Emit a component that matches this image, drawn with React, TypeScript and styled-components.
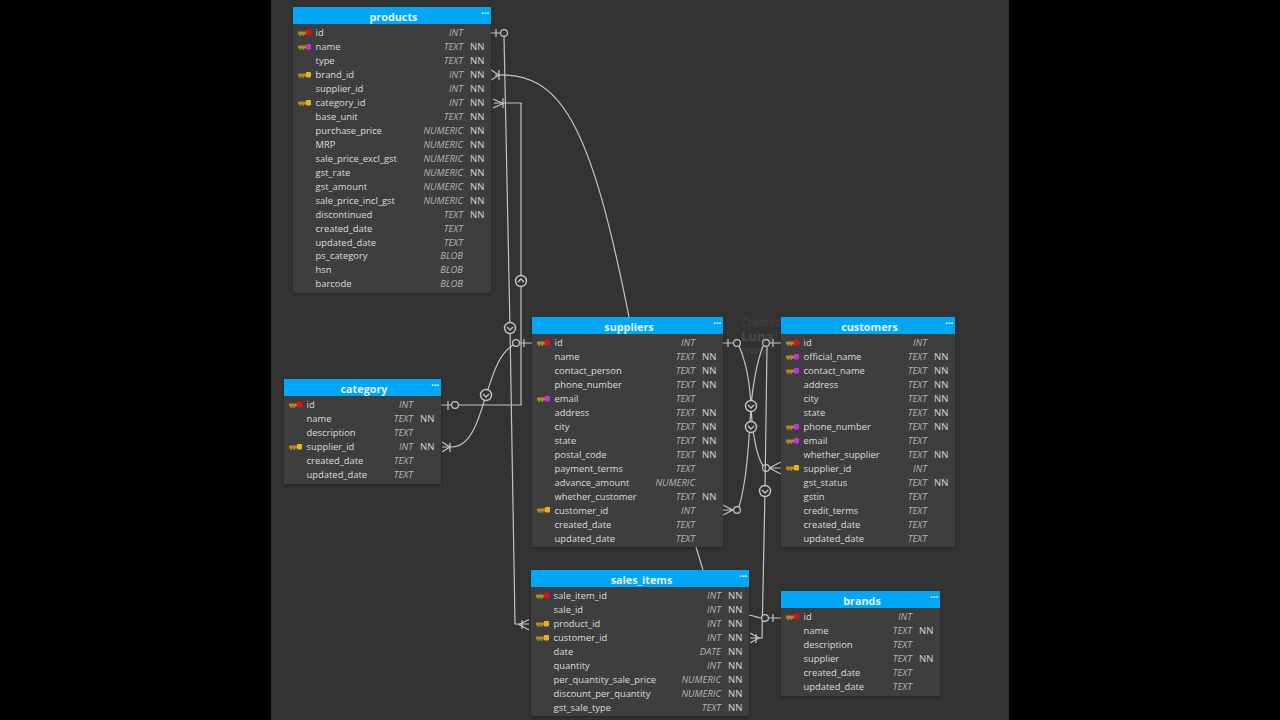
import React, { FC } from 'react';
import styled, { createGlobalStyle } from 'styled-components';

type KeyKind = 'pk' | 'uq' | 'fk';

interface IColumn {
  name: string;
  type: string;
  nn?: boolean;
  key?: KeyKind;
}

interface ITable {
  title: string;
  x: number;
  y: number;
  width: number;
  columns: IColumn[];
}

const col = (name: string, type: string, nn = false, key?: KeyKind): IColumn => ({
  name,
  type,
  nn,
  key,
});

const tables: ITable[] = [
  {
    title: 'products',
    x: 22,
    y: 7,
    width: 198,
    columns: [
      col('id', 'INT', false, 'pk'),
      col('name', 'TEXT', true, 'uq'),
      col('type', 'TEXT', true),
      col('brand_id', 'INT', true, 'fk'),
      col('supplier_id', 'INT', true),
      col('category_id', 'INT', true, 'fk'),
      col('base_unit', 'TEXT', true),
      col('purchase_price', 'NUMERIC', true),
      col('MRP', 'NUMERIC', true),
      col('sale_price_excl_gst', 'NUMERIC', true),
      col('gst_rate', 'NUMERIC', true),
      col('gst_amount', 'NUMERIC', true),
      col('sale_price_incl_gst', 'NUMERIC', true),
      col('discontinued', 'TEXT', true),
      col('created_date', 'TEXT'),
      col('updated_date', 'TEXT'),
      col('ps_category', 'BLOB'),
      col('hsn', 'BLOB'),
      col('barcode', 'BLOB'),
    ],
  },
  {
    title: 'suppliers',
    x: 261,
    y: 317,
    width: 191,
    columns: [
      col('id', 'INT', false, 'pk'),
      col('name', 'TEXT', true),
      col('contact_person', 'TEXT', true),
      col('phone_number', 'TEXT', true),
      col('email', 'TEXT', false, 'uq'),
      col('address', 'TEXT', true),
      col('city', 'TEXT', true),
      col('state', 'TEXT', true),
      col('postal_code', 'TEXT', true),
      col('payment_terms', 'TEXT'),
      col('advance_amount', 'NUMERIC'),
      col('whether_customer', 'TEXT', true),
      col('customer_id', 'INT', false, 'fk'),
      col('created_date', 'TEXT'),
      col('updated_date', 'TEXT'),
    ],
  },
  {
    title: 'customers',
    x: 510,
    y: 317,
    width: 174,
    columns: [
      col('id', 'INT', false, 'pk'),
      col('official_name', 'TEXT', true, 'uq'),
      col('contact_name', 'TEXT', true, 'uq'),
      col('address', 'TEXT', true),
      col('city', 'TEXT', true),
      col('state', 'TEXT', true),
      col('phone_number', 'TEXT', true, 'uq'),
      col('email', 'TEXT', false, 'uq'),
      col('whether_supplier', 'TEXT', true),
      col('supplier_id', 'INT', false, 'fk'),
      col('gst_status', 'TEXT', true),
      col('gstin', 'TEXT'),
      col('credit_terms', 'TEXT'),
      col('created_date', 'TEXT'),
      col('updated_date', 'TEXT'),
    ],
  },
  {
    title: 'category',
    x: 13,
    y: 379,
    width: 157,
    columns: [
      col('id', 'INT', false, 'pk'),
      col('name', 'TEXT', true),
      col('description', 'TEXT'),
      col('supplier_id', 'INT', true, 'fk'),
      col('created_date', 'TEXT'),
      col('updated_date', 'TEXT'),
    ],
  },
  {
    title: 'sales_items',
    x: 260,
    y: 570,
    width: 218,
    columns: [
      col('sale_item_id', 'INT', true, 'pk'),
      col('sale_id', 'INT', true),
      col('product_id', 'INT', true, 'fk'),
      col('customer_id', 'INT', true, 'fk'),
      col('date', 'DATE', true),
      col('quantity', 'INT', true),
      col('per_quantity_sale_price', 'NUMERIC', true),
      col('discount_per_quantity', 'NUMERIC', true),
      col('gst_sale_type', 'TEXT', true),
    ],
  },
  {
    title: 'brands',
    x: 510,
    y: 591,
    width: 159,
    columns: [
      col('id', 'INT', false, 'pk'),
      col('name', 'TEXT', true),
      col('description', 'TEXT'),
      col('supplier', 'TEXT', true),
      col('created_date', 'TEXT'),
      col('updated_date', 'TEXT'),
    ],
  },
];

const keyColors: Record<KeyKind, string> = {
  pk: '#e0101c',
  uq: '#d02fd8',
  fk: '#e8b418',
};

const GlobalStyle = createGlobalStyle`
  html, body {
    margin: 0;
    height: 100%;
    background: #000;
    font-family: "Open Sans", "Liberation Sans", sans-serif;
  }
`;

const Page = styled.div`
  display: flex;
  justify-content: center;
  height: 720px;
  overflow: hidden;
  background: #000;
`;

const Canvas = styled.div`
  position: relative;
  width: 738px;
  height: 720px;
  overflow: hidden;
  background: #333333;
`;

const Watermark = styled.div`
  position: absolute;
  left: 470px;
  top: 315px;
  color: #444444;
  font-size: 11px;
  line-height: 14px;
`;

const WatermarkStrong = styled.div`
  font-weight: 700;
  font-size: 13px;
  color: #4a4a4a;
`;

const Wires = styled.svg`
  position: absolute;
  left: 0;
  top: 0;
  fill: none;
  stroke: #c4c4c4;
  stroke-width: 1.2;
`;

const Table = styled.div<{ $x: number; $y: number; $width: number }>`
  position: absolute;
  left: ${({ $x }) => $x}px;
  top: ${({ $y }) => $y}px;
  width: ${({ $width }) => $width}px;
  padding-bottom: 2px;
  background: #3e3e3e;
  box-shadow: 0 1px 3px rgba(0, 0, 0, 0.3);
`;

const TableHeader = styled.div`
  position: relative;
  height: 17px;
  margin-bottom: 2px;
  padding-left: 3px;
  background: #00a7f6;
  color: #e4f3fb;
  font-size: 10.8px;
  font-weight: 700;
  line-height: 20px;
  text-align: center;
`;

const HeaderDots = styled.span`
  position: absolute;
  right: 2px;
  top: -3px;
  color: #cfeefc;
  font-size: 11px;
  font-weight: 700;
  line-height: 17px;
  letter-spacing: -0.5px;
`;

const Row = styled.div`
  display: flex;
  align-items: center;
  height: 13.95px;
  color: #dcdcdc;
  font-size: 9.4px;
  white-space: nowrap;
`;

const KeySlot = styled.span`
  display: flex;
  align-items: center;
  flex: none;
  width: 22.6px;
  padding-left: 5px;
  box-sizing: border-box;
`;

const ColumnName = styled.span`
  flex: 1;
`;

const ColumnType = styled.span`
  color: #b4b4b4;
  font-size: 9.5px;
  font-style: italic;
`;

const ColumnNull = styled.span`
  flex: none;
  width: 28px;
  padding-left: 7px;
  box-sizing: border-box;
  color: #d4d4d4;
  font-size: 9.5px;
`;

const KeyIcon: FC<{ kind: KeyKind }> = ({ kind }) => (
  <svg width="14" height="8" viewBox="0 0 14 8">
    <path d="M0 2.5h9v3H5.8v1.4H4.4V5.5H3v1.4H1.6V5.5H0z" fill="#b08c22" />
    {kind === 'pk' ? (
      <circle cx="10.5" cy="3.5" r="3" fill={keyColors[kind]} />
    ) : (
      <rect x="8" y="1" width="5" height="5.4" rx="0.8" fill={keyColors[kind]} />
    )}
  </svg>
);

// circle on the line, with a chevron showing the direction of the relation
const Chevron: FC<{ x: number; y: number; up?: boolean }> = ({ x, y, up }) => (
  <g>
    <circle cx={x} cy={y} r="5.5" fill="#333333" strokeWidth="1.4" />
    <path
      d={
        up
          ? `M${x - 3} ${y + 1}l3 -3l3 3`
          : `M${x - 3} ${y - 1}l3 3l3 -3`
      }
      strokeWidth="1.4"
    />
  </g>
);

const Ring: FC<{ x: number; y: number }> = ({ x, y }) => (
  <circle cx={x} cy={y} r="3.4" fill="#333333" />
);

const Connectors: FC = () => (
  <Wires width="738" height="720" viewBox="271 0 738 720">
    {/* products.id - sales_items.product_id */}
    <path d="M504 36L510 328L515 624H529" />
    <path d="M491 33H500M496 29V37" />
    <Ring x={504} y={33} />
    <path d="M522 620V629M529 619.5L519 624.5L529 630" />
    <Chevron x={510} y={328} />

    {/* category.id - products.category_id */}
    <path d="M459 405H521V103H494" />
    <path d="M441 405H451M448 401V410" />
    <Ring x={455} y={405} />
    <path d="M503 98V108M493 99L503 103.5L493 108" />
    <Chevron x={521} y={281} up />

    {/* suppliers.id - products.brand_id curve */}
    <path d="M495 75C560 72 590 120 629 317" />
    <path d="M499 70V80M491 70L499 75L491 80" />

    {/* suppliers.id - category.supplier_id */}
    <path d="M513 345C498 355 494 372 486 395C480 415 472 447 452 447H442" />
    <path d="M450 443V452M442 442L450 447L442 452" />
    <path d="M520 343H532M524 339V347" />
    <Ring x={516} y={343} />
    <Chevron x={486} y={395} />

    {/* suppliers.id - customers.supplier_id */}
    <path d="M739 346C746 362 750 385 751 406C752 430 756 455 763 466" />
    <path d="M723 343H733M728 339V347" />
    <Ring x={737} y={343} />
    <path d="M769 468L781 462M769 468H781M769 468L781 474" />
    <Ring x={766} y={468} />

    {/* customers.id - suppliers.customer_id */}
    <path d="M763 346C757 362 753 385 751 406C749 440 747 480 739 507" />
    <path d="M770 343H781M773 339V347" />
    <path d="M733 510L723 505M733 510H723M733 510L723 515" />
    <Ring x={737} y={510} />
    <Ring x={766} y={343} />
    <Chevron x={751} y={406} />
    <Chevron x={751} y={427} />

    {/* customers.id - sales_items.customer_id */}
    <path d="M767 347L765 491L762 638H750" />
    <path d="M756 634V643M750 633L759 638L750 643" />
    <Chevron x={765} y={491} />

    {/* brands.id - products.brand_id, leaves from under sales_items */}
    <path d="M749 615C755 616 758 618 761 618" />
    <path d="M769 618H781M773 614V622" />
    <Ring x={765} y={618} />

    {/* suppliers - sales_items */}
    <path d="M696 547L703 570" />
  </Wires>
);

const App: FC = () => (
  <Page>
    <GlobalStyle />
    <Canvas>
      <Watermark>
        Created
        <WatermarkStrong>Luna</WatermarkStrong>
        www
      </Watermark>
      <Connectors />
      {tables.map((table) => (
        <Table key={table.title} $x={table.x} $y={table.y} $width={table.width}>
          <TableHeader>
            {table.title}
            <HeaderDots>···</HeaderDots>
          </TableHeader>
          {table.columns.map((column) => (
            <Row key={column.name}>
              <KeySlot>{column.key && <KeyIcon kind={column.key} />}</KeySlot>
              <ColumnName>{column.name}</ColumnName>
              <ColumnType>{column.type}</ColumnType>
              <ColumnNull>{column.nn ? 'NN' : ''}</ColumnNull>
            </Row>
          ))}
        </Table>
      ))}
    </Canvas>
  </Page>
);

export default App;
